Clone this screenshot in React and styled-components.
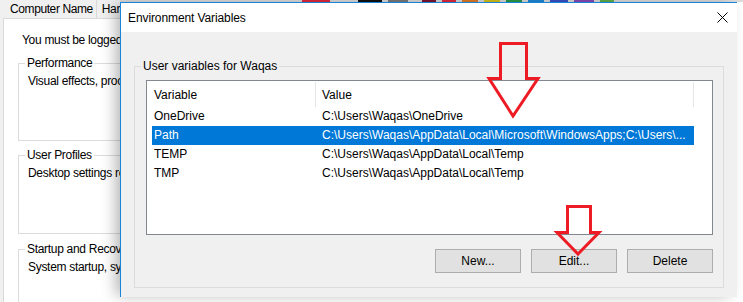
import React from "react";
import styled, { createGlobalStyle } from "styled-components";

const Global = createGlobalStyle`
  html, body { margin: 0; padding: 0; background: #ffffff; }
  body { font-family: "Segoe UI", "Liberation Sans", Arial, sans-serif; font-size: 12px; color: #000; }
  * { box-sizing: border-box; }
`;

const Desktop = styled.div`
  position: relative;
  width: 743px;
  height: 302px;
  overflow: hidden;
  background: #ffffff;
`;

/* ---------- background window (System Properties) ---------- */
const BackWindow = styled.div`
  position: absolute;
  left: 0;
  top: 0;
  width: 130px;
  height: 302px;
  overflow: hidden;
  background: #f0f0f0;
  display: flex;
  flex-direction: column;
`;

const TabStrip = styled.div`
  display: flex;
  height: 18px;
`;

const Tab = styled.div`
  height: 18px;
  padding: 0 ${(p) => p.$pad || 6}px 0 ${(p) => p.$pl || 10}px;
  display: flex;
  align-items: center;
  background: #f0f0f0;
  border-right: 1px solid #d9d9d9;
  font-size: 12px;
  letter-spacing: -0.4px;
  line-height: 1;
  white-space: nowrap;
`;

const TabPage = styled.div`
  flex: 1;
  margin-left: 3px;
  background: #ffffff;
  border-left: 1px solid #d9d9d9;
  border-top: 1px solid #d9d9d9;
  padding: 13px 0 0 14px;
  display: flex;
  flex-direction: column;
`;

const Note = styled.div`
  margin-left: 4px;
  height: 16px;
  line-height: 16px;
  letter-spacing: -0.3px;
  white-space: nowrap;
`;

const BackGroup = styled.div`
  position: relative;
  width: 300px;
  flex-shrink: 0;
  height: ${(p) => p.$h}px;
  margin-top: ${(p) => p.$mt}px;
  border: 1px solid #dcdcdc;
  padding: 10px 0 0 9px;
  letter-spacing: -0.3px;
  white-space: nowrap;
`;

const GroupLabel = styled.span`
  position: absolute;
  left: ${(p) => p.$left || 6}px;
  top: -9px;
  padding: 0 2px;
  background: ${(p) => p.$bg || "#ffffff"};
  line-height: 16px;
  white-space: nowrap;
`;

/* ---------- top strip of another window ---------- */
const ColorStrip = styled.div`
  position: absolute;
  left: 120px;
  top: 0;
  width: 623px;
  height: 2px;
  display: flex;
  background: #dcdcdc;
`;

const Swatch = styled.div`
  width: ${(p) => p.$w}px;
  margin-left: ${(p) => p.$ml || 0}px;
  background: ${(p) => p.$c};
`;

/* ---------- dialog ---------- */
const Dialog = styled.div`
  position: absolute;
  left: 120px;
  top: 2px;
  width: 617px;
  height: 295px;
  border-left: 1px solid #1883d7;
  border-top: 1px solid #1883d7;
  background: #f0f0f0;
  box-shadow: -6px 0 14px -2px rgba(0, 0, 0, 0.3);
  display: flex;
  flex-direction: column;
`;

const TitleBar = styled.div`
  height: 29px;
  background: #ffffff;
  display: flex;
  align-items: center;
  justify-content: space-between;
  padding: 0 9px 0 7px;
`;

const Title = styled.span`
  font-size: 12px;
  letter-spacing: -0.1px;
`;

const Body = styled.div`
  flex: 1;
  padding: 34px 13px 9px 13px;
  display: flex;
  flex-direction: column;
`;

const GroupBox = styled.div`
  position: relative;
  border: 1px solid #dcdcdc;
  padding: 13px 10px 14px 11px;
  display: flex;
  flex-direction: column;
`;

const ListBox = styled.div`
  height: 155px;
  background: #ffffff;
  border: 1px solid #828790;
  padding: 0 0 0 5px;
  display: flex;
  flex-direction: column;
`;

const Grid = styled.div`
  display: grid;
  grid-template-columns: 164px 378px;
`;

const HeadCell = styled.div`
  height: 25px;
  display: flex;
  align-items: center;
  padding-left: ${(p) => p.$pl}px;
  border-right: 1px solid #e5e5e5;
  margin-top: 1px;
`;

const Row = styled.div`
  display: contents;
`;

const Cell = styled.div`
  height: 19px;
  line-height: 19px;
  padding-left: ${(p) => p.$pl}px;
  white-space: nowrap;
  overflow: hidden;
  background: ${(p) => (p.$sel ? "#0078d7" : "transparent")};
  color: ${(p) => (p.$sel ? "#ffffff" : "#000000")};
`;

const ButtonRow = styled.div`
  display: flex;
  justify-content: flex-end;
  gap: 10px;
  margin-top: 14px;
`;

const Button = styled.button`
  width: 86px;
  height: 24px;
  background: #e1e1e1;
  border: 1px solid #adadad;
  font-family: "Segoe UI", "Liberation Sans", Arial, sans-serif;
  font-size: 12px;
  color: #000;
  padding: 0;
`;

const Overlay = styled.svg`
  position: absolute;
  left: 0;
  top: 0;
  pointer-events: none;
`;

const rows = [
  ["OneDrive", "C:\\Users\\Waqas\\OneDrive"],
  ["Path", "C:\\Users\\Waqas\\AppData\\Local\\Microsoft\\WindowsApps;C:\\Users\\..."],
  ["TEMP", "C:\\Users\\Waqas\\AppData\\Local\\Temp"],
  ["TMP", "C:\\Users\\Waqas\\AppData\\Local\\Temp"],
];

const swatches = [
  { w: 28, ml: 182, c: "#e0283b" },
  { w: 24, ml: 28, c: "#101010" },
  { w: 20, ml: 6, c: "#7a7a7a" },
  { w: 14, ml: 14, c: "#7b1530" },
  { w: 14, ml: 6, c: "#e0283b" },
  { w: 16, ml: 6, c: "#e07a28" },
  { w: 16, ml: 6, c: "#d6c21a" },
  { w: 16, ml: 6, c: "#2a9a48" },
  { w: 16, ml: 6, c: "#1e88d8" },
  { w: 18, ml: 6, c: "#3b4fc8" },
  { w: 20, ml: 6, c: "#8a47b8" },
  { w: 14, ml: 6, c: "#5fb04a" },
];

export default function App() {
  return (
    <>
      <Global />
      <Desktop>
        <BackWindow>
          <TabStrip>
            <Tab $pad={3} $pl={10}>Computer Name</Tab>
            <Tab $pl={5}>Hardware</Tab>
          </TabStrip>
          <TabPage>
            <Note>You must be logged on as an Administrator to make most of these changes.</Note>
            <BackGroup $mt={15} $h={78}>
              <GroupLabel>Performance</GroupLabel>
              Visual effects, processor scheduling, memory usage, and virtual memory
            </BackGroup>
            <BackGroup $mt={14} $h={79}>
              <GroupLabel>User Profiles</GroupLabel>
              Desktop settings related to your sign-in
            </BackGroup>
            <BackGroup $mt={15} $h={80}>
              <GroupLabel>Startup and Recovery</GroupLabel>
              System startup, system failure, and debugging information
            </BackGroup>
          </TabPage>
        </BackWindow>

        <ColorStrip>
          {swatches.map((s, i) => (
            <Swatch key={i} $w={s.w} $ml={s.ml} $c={s.c} />
          ))}
        </ColorStrip>

        <Dialog>
          <TitleBar>
            <Title>Environment Variables</Title>
            <svg width="11" height="11" viewBox="0 0 11 11">
              <path d="M0.5 0.5 L10.5 10.5 M10.5 0.5 L0.5 10.5" stroke="#000" strokeWidth="1" fill="none" />
            </svg>
          </TitleBar>
          <Body>
            <GroupBox>
              <GroupLabel $bg="#f0f0f0" $left={6}>User variables for Waqas</GroupLabel>
              <ListBox>
                <Grid>
                  <HeadCell $pl={2}>Variable</HeadCell>
                  <HeadCell $pl={6}>Value</HeadCell>
                  {rows.map(([name, value], i) => (
                    <Row key={name}>
                      <Cell $pl={2} $sel={i === 1}>{name}</Cell>
                      <Cell $pl={6} $sel={i === 1}>{value}</Cell>
                    </Row>
                  ))}
                </Grid>
              </ListBox>
              <ButtonRow>
                <Button>New...</Button>
                <Button>Edit...</Button>
                <Button>Delete</Button>
              </ButtonRow>
            </GroupBox>
          </Body>
        </Dialog>

        <Overlay width="743" height="302" viewBox="0 0 743 302">
          <polygon
            points="500.5,43.5 526.5,43.5 526.5,78.5 538,78.5 513,116 489,78.5 500.5,78.5"
            fill="none"
            stroke="#ed1c24"
            strokeWidth="3"
            strokeLinejoin="miter"
          />
          <polygon
            points="567.5,206.5 590.5,206.5 590.5,232.5 599,232.5 578,254 557,232.5 567.5,232.5"
            fill="none"
            stroke="#ed1c24"
            strokeWidth="3"
            strokeLinejoin="miter"
          />
        </Overlay>
      </Desktop>
    </>
  );
}
